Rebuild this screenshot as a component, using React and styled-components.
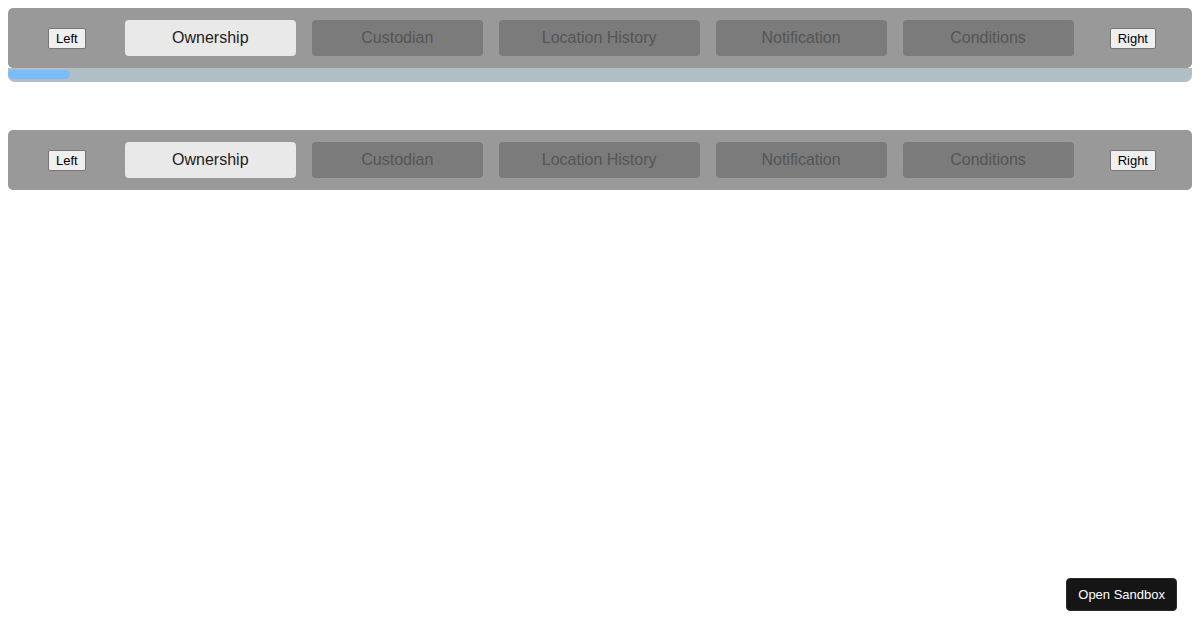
import styled, { createGlobalStyle } from "styled-components";

const Global = createGlobalStyle`
    body {
        margin: 8px;
        font-family: "Liberation Sans", Arial, sans-serif;
        background: #fff;
    }
`

const tabs = ["Ownership", "Custodian", "Location History", "Notification", "Conditions"]

const Bar = styled.div`
    height: 60px;
    background-color: #999999;
    border-radius: 5px;
    display: flex;
    align-items: center;
    justify-content: space-between;
    padding: 0 36px 0 40px;
    margin-top: ${props => props.$top || 0}px;
`

const Arrow = styled.button`
    font-family: "Liberation Sans", Arial, sans-serif;
    font-size: 13px;
    color: #000;
    background-color: #efefef;
    border: 1px solid #767676;
    border-radius: 2px;
    height: 21px;
    padding: 0 7px;
    cursor: pointer;
`

const Tabs = styled.div`
    display: flex;
    gap: 16px;
    margin-left: 3px;
`

const Tab = styled.div`
    min-width: 171px;
    height: 36px;
    padding: 0 43px;
    box-sizing: border-box;
    display: flex;
    align-items: center;
    justify-content: center;
    border-radius: 4px;
    font-size: 16px;
    background-color: ${props => props.$active ? "#e9e9e9" : "#7b7b7b"};
    color: ${props => props.$active ? "#222" : "#555"};
    cursor: pointer;
`

const Track = styled.div`
    height: 14px;
    padding: 2px 0 3px;
    box-sizing: border-box;
    background-color: #b0bec5;
    border-radius: 0 0 7px 7px;
`

const Thumb = styled.div`
    height: 9px;
    border-radius: 5px;
    background-color: #78bdfa;
`

const Sandbox = styled.button`
    position: fixed;
    right: 23px;
    bottom: 19px;
    height: 33px;
    padding: 0 11px;
    background-color: #151515;
    color: #fff;
    border: 1px solid #2a2a2a;
    border-radius: 4px;
    font-family: "Liberation Sans", Arial, sans-serif;
    font-size: 13px;
`

function TabBar({top}) {
    return (
        <Bar $top={top}>
            <Arrow>Left</Arrow>
            <Tabs>
                {tabs.map((t, i) => (
                    <Tab key={t} $active={i === 0}>{t}</Tab>
                ))}
            </Tabs>
            <Arrow>Right</Arrow>
        </Bar>
    )
}

export default function App() {
    return (
        <>
            <Global />
            <TabBar />
            <Track>
                <Thumb style={{width: 62}} />
            </Track>
            <TabBar top={48} />
            <Sandbox>Open Sandbox</Sandbox>
        </>
    )
}
